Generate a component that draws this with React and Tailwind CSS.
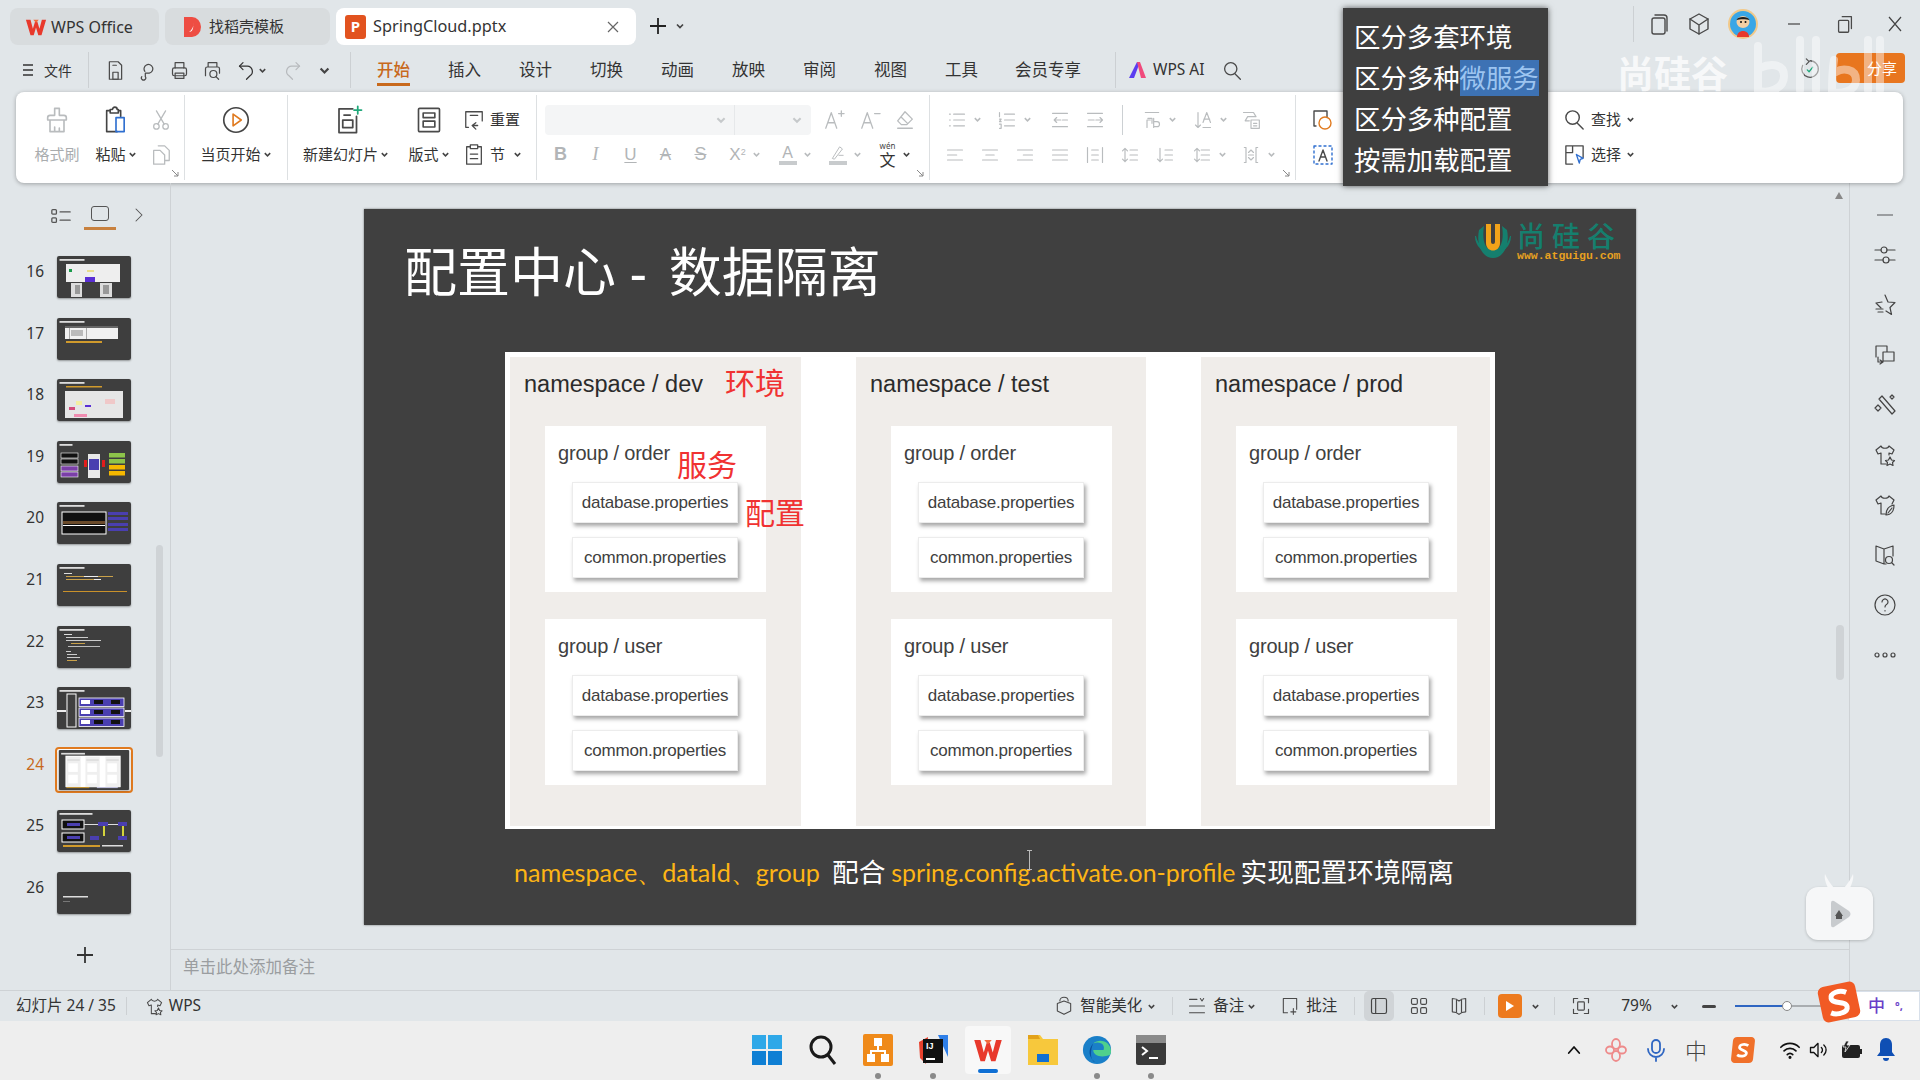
import React from "react";

const Ic = ({ s = 20, c = "#4a4a4a", w = 1.4, className = "", children }) => (
  <svg width={s} height={s} viewBox="0 0 24 24" fill="none" stroke={c} strokeWidth={w} strokeLinecap="round" strokeLinejoin="round" className={"shrink-0 " + className}>
    {children}
  </svg>
);
const Chev = ({ c = "#444", s = 10, className = "" }) => (
  <svg width={s} height={s} viewBox="0 0 10 10" fill="none" stroke={c} strokeWidth="1.7" className={"shrink-0 " + className}>
    <path d="M2 3.5 5 6.5 8 3.5" />
  </svg>
);
const Sep = ({ className = "" }) => <div className={"w-px bg-[#ccd0d3] shrink-0 " + className} />;
const G = "#b9bcbe";

const WpsLogo = ({ s = 22 }) => (
  <svg width={s} height={s} viewBox="0 0 24 24" className="shrink-0">
    <path d="M1 4h5l2.6 10L11 6h2.4l2.4 8L18.4 4H23l-5 17h-3.5L12 12.5 9.5 21H6z" fill="#e8392c" />
    <path d="M9 4h6l-3 3.4z" fill="#f26a3d" />
  </svg>
);

const Tab = ({ className, children }) => (
  <div className={"h-[37px] rounded-lg flex items-center shrink-0 " + className}>{children}</div>
);

function TitleBar() {
  return (
    <div className="h-[48px] flex pl-[10px] shrink-0">
      <div className="flex gap-[6px] pt-[8px]">
        <Tab className="w-[149px] bg-[#d8dcde] pl-[15px] gap-[4px]">
          <WpsLogo s={22} />
          <span className="text-[16px] text-[#333]">WPS Office</span>
        </Tab>
        <Tab className="w-[165px] bg-[#d8dcde] pl-[16px] gap-[6px]">
          <svg width="22" height="24" viewBox="0 0 22 24" className="shrink-0">
            <path d="M3 2h8a9 10 0 0 1 0 20H3z" fill="#ee4d43" />
            <path d="M12 8c1 3-1 7-4 9 3 0 5-3 4-9z" fill="#fff" />
          </svg>
          <span className="text-[15px] text-[#333]">找稻壳模板</span>
        </Tab>
        <Tab className="w-[300px] bg-white pl-[9px]">
          <div className="w-[21px] h-[24px] rounded-[3px] bg-[#e2531f] text-white text-[15px] font-bold flex items-center justify-center">P</div>
          <span className="text-[16.300px] text-[#333] ml-[7px]">SpringCloud.pptx</span>
          <svg width="14" height="14" viewBox="0 0 14 14" stroke="#666" strokeWidth="1.2" className="ml-[100px]"><path d="M2 2l10 10M12 2 2 12" /></svg>
        </Tab>
      </div>
      <div className="flex items-center pt-[4px] ml-[13px]">
        <svg width="18" height="18" viewBox="0 0 18 18" stroke="#222" strokeWidth="1.8"><path d="M9 1v16M1 9h16" /></svg>
        <Chev className="ml-[8px]" />
      </div>
      <div className="ml-auto flex items-center pb-[1px]">
        <Sep className="h-[36px]" />
        <Ic s={24} className="ml-[13px]"><rect x="5" y="6" width="13" height="16" rx="2" /><path d="M8 3h9a3 3 0 0 1 3 3v13" /></Ic>
        <Ic s={24} className="ml-[16px]"><path d="M12 2 21 7v10l-9 5-9-5V7z" /><path d="M3 7l9 6 9-6M12 13v9" /></Ic>
        <div className="ml-[17px] w-[30px] h-[30px] rounded-full bg-[#f1c98a] flex items-center justify-center">
          <svg width="26" height="26" viewBox="0 0 26 26">
            <circle cx="13" cy="13" r="13" fill="#39a6e6" />
            <ellipse cx="13" cy="11" rx="6.5" ry="6" fill="#f4cfa4" />
            <path d="M6.5 9c1-4 12-4 13 0-3-1-10-1-13 0z" fill="#1c1c1c" />
            <circle cx="11" cy="11" r="1" fill="#111" /><circle cx="15.5" cy="11" r="1" fill="#111" />
            <path d="M7 26c0-8 12-8 12 0z" fill="#e8392c" />
          </svg>
        </div>
        <svg width="14" height="14" viewBox="0 0 14 14" stroke="#444" strokeWidth="1.2" className="ml-[29px]"><path d="M1 7h12" /></svg>
        <Ic s={22} className="ml-[33px]"><rect x="5" y="8" width="11" height="13" rx="1" /><path d="M9 4h10v13" /></Ic>
        <svg width="16" height="16" viewBox="0 0 16 16" stroke="#444" strokeWidth="1.2" className="ml-[31px] mr-[17px]"><path d="M2 1l12 14M14 1 2 15" /></svg>
      </div>
    </div>
  );
}

const MENU = ["插入", "设计", "切换", "动画", "放映", "审阅", "视图", "工具"];
function MenuBar() {
  return (
    <div className="h-[44px] flex items-center shrink-0 text-[#333]">
      <svg width="14" height="14" viewBox="0 0 14 14" stroke="#333" strokeWidth="1.3" className="ml-[21px]"><path d="M2 2h10M2 7h10M2 12h10" /></svg>
      <span className="ml-[9px] text-[14px]">文件</span>
      <Sep className="h-[36px] ml-[16px]" />
      <Ic s={21} className="ml-[16px]"><path d="M5 2h10l4 4v16H5z" /><path d="M9 14h6v8H9zM9 6h4" /></Ic>
      <Ic s={21} className="ml-[11px]"><path d="M9 13a5 5 0 1 1 5 2H9.500v4a2.500 2.500 0 1 1-4 0" /></Ic>
      <Ic s={21} className="ml-[11px]"><rect x="4" y="9" width="16" height="9" rx="2" /><path d="M7 9V3h10v6M7 15h10v6H7z" /></Ic>
      <Ic s={21} className="ml-[12px]"><path d="M7 8V3h10v5M4 18V10a2 2 0 0 1 2-2h12a2 2 0 0 1 2 2v5" /><circle cx="13" cy="16" r="4" /><path d="M16 19l3 3" /></Ic>
      <Ic s={21} className="ml-[13px]" c="#333"><path d="M8 3 4 7l4 4" /><path d="M4 7h9a6 6 0 0 1 3 11l-4 4" /></Ic>
      <Chev className="ml-[1px]" s={9} />
      <Ic s={21} className="ml-[15px]" c="#b7babd"><path d="M16 3l4 4-4 4" /><path d="M20 7h-9a6 6 0 0 0-3 11l4 4" /></Ic>
      <Chev className="ml-[15px]" s={13} />
      <Sep className="h-[36px] ml-[19px]" />
      <div className="relative ml-[26px] w-[33px] h-[44px] flex items-center justify-center text-[16.5px] font-medium text-[#c8691c]">
        开始
        <div className="absolute left-0 right-0 bottom-[6px] h-[3px] bg-[#c8691c]" />
      </div>
      <div className="flex ml-[38px] gap-[38px]">
        {MENU.map((m) => (<span key={m} className="w-[33px] text-[16.5px] whitespace-nowrap">{m}</span>))}
      </div>
      <span className="ml-[37px] text-[16.5px]">会员专享</span>
      <Sep className="h-[36px] ml-[34px]" />
      <svg width="19" height="20" viewBox="0 0 19 20" className="ml-[12px]">
        <path d="M9 2h3L6 18H1z" fill="#5b3df0" /><path d="M9 2h3l6 16h-5z" fill="#f04a7c" />
      </svg>
      <span className="ml-[6px] text-[15.500px]">WPS AI</span>
      <Ic s={21} className="ml-[17px]" w={1.5}><circle cx="10" cy="10" r="7" /><path d="M15 16l6 6" /></Ic>
    </div>
  );
}

const Row = ({ className = "", children }) => (
  <div className={"h-[35px] flex items-center shrink-0 " + className}>{children}</div>
);
const Launcher = ({ className }) => (
  <svg width="9" height="9" viewBox="0 0 9 9" stroke="#888" strokeWidth="1" fill="none" className={"absolute " + className}><path d="M1 1l6 6M7 3v4H3" /></svg>
);
const Cell = ({ className = "w-[35px]", children }) => (
  <div className={"flex items-center justify-center gap-[6px] shrink-0 " + className}>{children}</div>
);
const Lines = ({ rows, c = G }) => (
  <Ic s={20} c={c}>{rows.map((d, i) => <path key={i} d={d} />)}</Ic>
);

function Ribbon() {
  return (
    <div className="relative ml-[16px] mr-[17px] h-[91px] bg-white rounded-lg shadow-[0_1px_4px_rgba(0,0,0,0.3)] flex shrink-0 text-[15px] text-[#333]">
      {/* clipboard */}
      <div className="relative w-[169px] h-[85px] mt-[3px] pt-[7px] pl-[18px] flex border-r border-[#dde0e2]">
        <div className="w-[46px] flex flex-col items-center">
          <Row><Ic s={28} c={G}><path d="M10 2h4v6h4a2 2 0 0 1 2 2v2H4v-2a2 2 0 0 1 2-2h4zM6 12v10h12V12M10 22v-4M14 22v-3" /></Ic></Row>
          <Row className="text-[#a9acae] whitespace-nowrap">格式刷</Row>
        </div>
        <div className="w-[46px] ml-[13px] flex flex-col items-center">
          <Row><Ic s={28} c="#444"><path d="M6 4H4v18h9M14 4h2v5M7 6V3h2a2 2 0 0 1 4 0h1v3z" /><rect x="12" y="10" width="7" height="12" stroke="#2f6fd0" /></Ic></Row>
          <Row className="gap-[2px] whitespace-nowrap">粘贴<Chev s={9} /></Row>
        </div>
        <div className="w-[30px] ml-[7px] flex flex-col items-center">
          <Row><Ic s={22} c={G}><circle cx="7" cy="19" r="3" /><circle cx="17" cy="19" r="3" /><path d="M8.500 16.500 17 2M15.500 16.500 7 2" /></Ic></Row>
          <Row><Ic s={22} c={G}><path d="M9 2h7l5 5v11h-5M4 7h7l5 5v10H4z" /></Ic></Row>
        </div>
        <Launcher className="right-[4px] bottom-[2px]" />
      </div>
      {/* play */}
      <div className="w-[103px] h-[85px] mt-[3px] pt-[7px] flex flex-col items-center border-r border-[#dde0e2]">
        <Row><Ic s={28} c="#444"><circle cx="12" cy="12" r="10.500" /><path d="M9.500 7l7 5-7 5z" stroke="#e07a1f" /></Ic></Row>
        <Row className="gap-[2px] whitespace-nowrap">当页开始<Chev s={9} /></Row>
      </div>
      {/* slides */}
      <div className="w-[249px] h-[85px] mt-[3px] pt-[7px] pl-[12px] flex border-r border-[#dde0e2]">
        <div className="w-[92px] flex flex-col items-center">
          <Row className="pl-[6px]"><Ic s={30}><path d="M15 3H4v19h14V9" /><path d="M8 8h5M7 12h8v6H7z" /><path d="M19 1v6M16 4h6" stroke="#1fa87a" /></Ic></Row>
          <Row className="gap-[2px] whitespace-nowrap">新建幻灯片<Chev s={9} /></Row>
        </div>
        <div className="w-[50px] ml-[12px] flex flex-col items-center">
          <Row><Ic s={28}><rect x="3" y="2" width="18" height="20" rx="1" /><rect x="7" y="6" width="10" height="4" /><rect x="7" y="13" width="10" height="5" /></Ic></Row>
          <Row className="gap-[2px] whitespace-nowrap">版式<Chev s={9} /></Row>
        </div>
        <div className="ml-[9px] flex flex-col">
          <Row className="gap-[5px] whitespace-nowrap"><Ic s={22}><path d="M6 20H3V3h18v10M8 7h8" /><path d="M14 22l-4-4 4-3M10 18h6" /></Ic>重置</Row>
          <Row className="gap-[5px] whitespace-nowrap"><Ic s={22}><path d="M8 3H4v19h16V3h-4M8 1v4h8V1zM8 11h8M8 16h8" /></Ic>节<Chev s={9} className="ml-[3px]" /></Row>
        </div>
      </div>
      {/* font */}
      <div className="relative w-[393px] h-[85px] mt-[3px] pt-[7px] flex flex-col border-r border-[#dde0e2]">
        <Row className="pl-[8px]">
          <div className="w-[266px] h-[30px] rounded bg-[#f4f5f6] flex items-center">
            <div className="w-[190px] h-full flex items-center justify-end pr-[7px] border-r border-[#e6e8ea]"><Chev c="#c6c9cb" s={12} /></div>
            <div className="flex-1 flex justify-end pr-[8px]"><Chev c="#c6c9cb" s={12} /></div>
          </div>
          <Cell className="w-[38px] ml-[4px]"><Ic s={22} c={G}><path d="M3 21 9 4l6 17M5.500 15h7M17 5h6M20 2v6" /></Ic></Cell>
          <Cell className="w-[34px]"><Ic s={22} c={G}><path d="M3 21 9 4l6 17M5.500 15h7M17 5h6" /></Ic></Cell>
          <Cell className="w-[36px]"><Ic s={22} c={G}><path d="M12 3l8 8-6 6H8l-4-4zM8 9l7 7M4 21h16" /></Ic></Cell>
        </Row>
        <Row className="pl-[6px]">
          <Cell><span className="font-['Liberation_Sans'] text-[18px] font-bold text-[#b2b5b7]">B</span></Cell>
          <Cell><span className="font-['Liberation_Serif'] text-[19px] italic text-[#b2b5b7]">I</span></Cell>
          <Cell><span className="font-['Liberation_Sans'] text-[17px] underline underline-offset-2 text-[#b2b5b7]">U</span></Cell>
          <Cell><span className="font-['Liberation_Sans'] text-[17px] line-through text-[#b2b5b7]">A</span></Cell>
          <Cell><span className="font-['Liberation_Sans'] text-[18px] line-through text-[#b2b5b7]">S</span></Cell>
          <Cell className="w-[44px] ml-[5px]"><span className="font-['Liberation_Sans'] text-[17px] text-[#b2b5b7]">X<sup className="text-[9px]">2</sup></span><Chev c={G} s={9} /></Cell>
          <Cell className="w-[44px] ml-[6px]"><div className="flex flex-col items-center"><span className="font-['Liberation_Sans'] text-[16px] leading-[17px] text-[#b2b5b7]">A</span><div className="w-[18px] h-[4px] bg-[#c8cbcd]" /></div><Chev c={G} s={9} /></Cell>
          <Cell className="w-[44px] ml-[6px]"><div className="flex flex-col items-center"><Ic s={17} c={G}><path d="M5 20 15 4l4 3L8 21zM14 16h6" /></Ic><div className="w-[18px] h-[4px] bg-[#c8cbcd]" /></div><Chev c={G} s={9} /></Cell>
          <Cell className="w-[44px] ml-[6px]"><div className="flex flex-col items-center gap-[2px]"><span className="text-[8px] leading-[8px] text-[#444]">wén</span><span className="text-[16px] leading-[16px] text-[#333]">文</span></div><Chev s={9} /></Cell>
        </Row>
        <Launcher className="right-[4px] bottom-[2px]" />
      </div>
      {/* paragraph */}
      <div className="relative w-[366px] h-[85px] mt-[3px] pt-[7px] flex flex-col border-r border-[#dde0e2]">
        <Row className="pl-[9px]">
          <Cell className="w-[50px]"><Lines rows={["M3 5h1M8 5h13M3 12h1M8 12h13M3 19h1M8 19h13"]} /><Chev c={G} s={9} /></Cell>
          <Cell className="w-[50px]"><Lines rows={["M3 3v5M3 11h2l-2 3h2M3 17h2v5H3M9 5h12M9 12h12M9 19h12"]} /><Chev c={G} s={9} /></Cell>
          <Cell className="ml-[11px]"><Lines rows={["M3 4h18M3 20h18M13 12H5M8 9l-3 3 3 3M15 12h6"]} /></Cell>
          <Cell className="w-[35px] ml-[7px]"><Lines rows={["M3 4h18M3 20h18M4 12h7M13 12h8M18 9l3 3-3 3"]} /></Cell>
          <Sep className="h-[30px] ml-[10px]" />
          <Cell className="w-[50px] ml-[11px]"><Lines rows={["M4 3h16M6 21V12h4M7 10h5v6M14 10v11M14 14h4a2 2 0 0 1 0 6h-4"]} /><Chev c={G} s={9} /></Cell>
          <Cell className="w-[45px] ml-[4px]"><Lines rows={["M6 3v18M3 18l3 3 3-3M12 15 16.500 3 21 15M13 11h7M12 21h9"]} /><Chev c={G} s={9} /></Cell>
          <Cell className="ml-[8px]"><Lines rows={["M3 3h12l3 5H8l-3 5h5M12 12h10v10H12zM15 16h4M15 19h4"]} /></Cell>
        </Row>
        <Row className="pl-[7px]">
          <Cell><Lines rows={["M3 6h18M3 12h11M3 18h18"]} /></Cell>
          <Cell><Lines rows={["M3 6h18M7 12h10M3 18h18"]} /></Cell>
          <Cell><Lines rows={["M3 6h18M10 12h11M3 18h18"]} /></Cell>
          <Cell><Lines rows={["M3 6h18M3 12h18M3 18h18"]} /></Cell>
          <Cell><Lines rows={["M3 3v18M21 3v18M8 6h8M8 12h8M8 18h8"]} /></Cell>
          <Cell><Lines rows={["M6 4v16M3 7l3-3 3 3M3 17l3 3 3-3M12 6h9M12 12h9M12 18h9"]} /></Cell>
          <Cell><Lines rows={["M6 4v16M3 17l3 3 3-3M12 6h9M12 12h9M12 18h9"]} /></Cell>
          <Cell className="w-[45px] ml-[5px]"><Lines rows={["M6 4v16M3 7l3-3 3 3M3 17l3 3 3-3M11 6h10M11 12h10M11 18h10"]} /><Chev c={G} s={9} /></Cell>
          <Cell className="w-[45px] ml-[4px]"><Lines rows={["M4 3h2v18H4M20 3h-2v18h2M9 9l3-3 3 3M9 12h6M9 15l3 3 3-3"]} /><Chev c={G} s={9} /></Cell>
        </Row>
        <Launcher className="right-[4px] bottom-[2px]" />
      </div>
      {/* replace */}
      <div className="w-[40px] ml-[10px] mt-[10px] flex flex-col">
        <Row className="pl-[5px]"><Ic s={24}><path d="M5 18H3V3h13v6" /><circle cx="14" cy="15" r="6" stroke="#e07a1f" /></Ic></Row>
        <Row className="pl-[5px]"><Ic s={24}><rect x="3" y="3" width="18" height="18" stroke="#2f6fd0" strokeDasharray="2 3" /><path d="M8 18 12 7l4 11M9.500 14h5" /></Ic></Row>
      </div>
      <div className="ml-[217px] mt-[10px] flex flex-col">
        <Row className="gap-[5px] whitespace-nowrap"><Ic s={23} w={1.5}><circle cx="10" cy="10" r="7" /><path d="M15 16l6 6" /></Ic>查找<Chev s={9} /></Row>
        <Row className="gap-[5px] whitespace-nowrap"><Ic s={23}><path d="M3 10V3h18v12M3 10v12h7M10 3v7H3" /><path d="M14 12l7 4-3 1-1 4z" stroke="#2f6fd0" /></Ic>选择<Chev s={9} /></Row>
      </div>
    </div>
  );
}

/* ---------- thumbnails ---------- */
const R = (x, y, w, h, f) => <rect x={x} y={y} width={w} height={h} fill={f} />;
const Head = ({ w = 25, c = "#ddd" }) => <rect x="2.500" y="3" width={w} height="1.800" fill={c} />;
const T = {
  16: <><Head /><rect x="9" y="8" width="54" height="18" fill="#eeeeee" />{R(28, 21, 10, 5, "#5a2fd4")}{R(12, 13, 3, 3, "#1a9b4b")}{R(30, 14, 7, 2, "#e8dd8c")}{R(14, 27, 41, 14, "#dddddd")}{R(25, 27, 18, 14, "#404040")}{R(18, 29, 5, 9, "#999")}{R(46, 29, 6, 9, "#999")}</>,
  17: <><Head /><rect x="8" y="8" width="53" height="13" fill="#f1f1f1" />{R(8, 8, 53, 2, "#666")}{R(12, 10, 1, 11, "#aaa")}{R(29, 10, 1, 11, "#aaa")}{R(14, 12, 12, 6, "#bbb")}{R(9, 23, 36, 2, "#d09a2c")}</>,
  18: <><Head /><rect x="8" y="12" width="58" height="27" fill="#e6e6e6" />{R(9, 7, 36, 1.500, "#d09a2c")}{R(12, 28, 6, 3, "#d44e7e")}{R(19, 22, 6, 4, "#f3efa2")}{R(28, 26, 6, 2, "#5a2fd4")}{R(48, 20, 10, 5, "#f0c8c8")}{R(17, 35, 13, 3, "#f08cb0")}</>,
  19: <><Head w={13} />{[8, 14, 21, 27].map((y, i) => <g key={y}><rect x="4" y={y + 4} width="17" height="5" fill={i < 2 ? "#111" : "#7b3fa8"} stroke="#fff" strokeWidth=".6" /></g>)}<rect x="31" y="13" width="12" height="24" fill="#e8e8e8" />{R(32, 18, 10, 11, "#4a3fb0")}{R(27, 19, 3, 7, "#e21c1c")}{R(45, 19, 3, 7, "#e21c1c")}{R(52, 12, 16, 4.500, "#8dc44a")}{R(52, 18, 16, 4.500, "#8dc44a")}{R(52, 24, 16, 4.500, "#f5b800")}{R(52, 30, 16, 4.500, "#f5b800")}</>,
  20: <><Head /><rect x="5" y="10" width="44" height="22" fill="#111" stroke="#fff" />{R(6, 19, 42, 3, "#6a4a2a")}{R(6, 23, 42, 1, "#fff")}{R(51, 10, 20, 3, "#4a3fb0")}{R(51, 15, 20, 3, "#4a3fb0")}{R(51, 21, 20, 3, "#4a3fb0")}{R(51, 26, 20, 3, "#4a3fb0")}</>,
  21: <><Head />{R(7, 9, 8, 1, "#ddd")}{R(9, 12, 47, 1, "#c9a14a")}{R(9, 15, 35, 1, "#c9a14a")}{R(27, 12, 14, 1, "#eee")}{R(37, 15, 7, 1, "#eee")}{R(6, 27, 64, 1, "#c9912a")}</>,
  22: <><Head />{R(7, 8, 8, 1, "#ddd")}{R(9, 11, 22, 1, "#ccc")}{R(9, 14, 35, 1, "#ccc")}{R(14, 17, 14, 1, "#c9a14a")}{R(11, 20, 32, 1, "#bbb")}{R(9, 25, 5, 1, "#ccc")}{R(10, 28, 10, 1, "#ccc")}{R(10, 31, 13, 1, "#ccc")}{R(10, 34, 10, 1, "#c9a14a")}</>,
  23: <><Head />{R(10, 7, 9, 32, "#404040")}<rect x="10" y="7" width="9" height="33" fill="none" stroke="#fff" />{[11, 21, 31].map((y) => <g key={y}><rect x="22" y={y} width="45" height="8.500" fill="#4a3fb0" stroke="#fff" strokeWidth=".8" />{R(24, y + 2, 9, 4, "#fff")}{R(37, y + 2, 9, 4, "#111")}{R(54, y + 2, 9, 4, "#111")}</g>)}{R(0, 23, 9, 2, "#eee")}{R(68, 23, 6, 2, "#eee")}</>,
  24: <><Head />{R(7, 6, 58, 33, "#fff")}{[8, 28, 49].map((x) => <g key={x}>{R(x, 7, 15, 32, "#efefef")}{R(x + 1, 10, 13, 1, "#ccc")}{R(x + 2, 14, 10, 9, "#fff")}{R(x + 2, 26, 10, 9, "#fff")}</g>)}{R(8, 39, 24, 1, "#d09a2c")}{R(40, 39, 22, 1, "#cce")}</>,
  25: <><Head w={33} /><rect x="5" y="10" width="22" height="9" fill="#111" stroke="#fff" />{R(10, 13, 13, 3, "#4a3fb0")}<rect x="5" y="23" width="22" height="9" fill="#111" stroke="#fff" />{R(10, 26, 13, 3, "#4a3fb0")}{R(41, 12, 10, 4, "#4a3fb0")}{R(61, 12, 9, 4, "#4a3fb0")}{R(33, 26, 9, 4, "#4a3fb0")}{R(61, 26, 9, 4, "#4a3fb0")}{R(27, 14, 14, 1, "#ddd")}{R(51, 14, 10, 1, "#ddd")}{R(46, 16, 2, 10, "#d4d43c")}{R(65, 16, 2, 10, "#d4d43c")}{R(6, 35, 37, 2, "#d09a2c")}{R(45, 35, 21, 1.500, "#ddd")}</>,
  26: <>{R(6, 24, 25, 1.500, "#ddd")}{R(6, 29, 7, 1, "#777")}</>,
};
const Thumb = ({ n }) => {
  const sel = n === 24;
  return (
    <div className="flex h-[42px] shrink-0">
      <div className={"w-[46px] text-right pr-[2px] text-[15.500px] leading-[30px] " + (sel ? "text-[#c8691c]" : "text-[#333]")}>{n}</div>
      <div className={sel ? "ml-[9px] -mt-[2px] w-[78px] h-[46px] rounded-[4px] border-[2px] border-[#e07a1f] bg-white p-[1px]" : "ml-[11px]"}>
        <svg viewBox="0 0 74 42" width={sel ? 72 : 74} height={sel ? 40 : 42} className="rounded-[2px] shadow-[0_1px_2px_rgba(0,0,0,0.35)]">
          <rect width="74" height="42" fill="#3e3e3e" />
          {T[n]}
        </svg>
      </div>
    </div>
  );
};

function Sidebar() {
  return (
    <div className="relative w-[171px] border-r border-[#ced2d5] shrink-0 flex flex-col">
      <div className="h-[73px] flex items-start pt-[22px] shrink-0">
        <Ic s={22} className="ml-[50px]" c="#555"><rect x="2" y="5" width="5" height="5" rx="1" /><rect x="2" y="14" width="5" height="5" rx="1" /><path d="M11 7.500h11M11 16.500h11" /></Ic>
        <div className="ml-[12px] w-[32px] h-[25px] border-b-[3px] border-[#c8813f] flex justify-center">
          <div className="w-[18px] h-[15px] border-[1.500px] border-[#555] rounded-[3px] mt-[1px]" />
        </div>
        <Ic s={18} c="#555" className="ml-[14px] mt-[1px]"><path d="M8 4l8 8-8 8" /></Ic>
      </div>
      <div className="flex flex-col gap-[19.600px]">
        {[16, 17, 18, 19, 20, 21, 22, 23, 24, 25, 26].map((n) => <Thumb key={n} n={n} />)}
      </div>
      <svg width="20" height="20" viewBox="0 0 20 20" stroke="#333" strokeWidth="1.800" className="ml-[75px] mt-[31px]"><path d="M10 2v16M2 10h16" /></svg>
      <div className="absolute left-[156px] top-[362px] w-[7px] h-[212px] rounded-full bg-[#cfd3d6]" />
    </div>
  );
}

const Prop = ({ children }) => (
  <div className="w-[166px] h-[41px] bg-white border border-[#ececec] shadow-[2px_3px_4px_rgba(0,0,0,0.35)] flex items-center justify-center font-['Liberation_Sans'] text-[17px] tracking-[-0.2px] text-[#404040]">{children}</div>
);
const Group = ({ name }) => (
  <div className="ml-[35px] w-[221px] h-[166px] bg-white pt-[14px] pl-[13px]">
    <div className="h-[28px] leading-[26px] font-['Liberation_Sans'] text-[20px] tracking-[-0.2px] text-[#404040]">{name}</div>
    <div className="ml-[14px] mt-[14px] flex flex-col gap-[14px]">
      <Prop>database.properties</Prop>
      <Prop>common.properties</Prop>
    </div>
  </div>
);
const NS = ({ name, className }) => (
  <div className={"h-[469px] bg-[#f0edea] " + className}>
    <div className="h-[55px] flex items-center pl-[14px] font-['Liberation_Sans'] text-[23.500px] text-[#2b2b2b]">{name}</div>
    <div className="mt-[14px] flex flex-col gap-[27px]">
      <Group name="group / order" />
      <Group name="group / user" />
    </div>
  </div>
);

function Slide() {
  const red = "absolute text-[30px] leading-[30px] text-[#f03232]";
  return (
    <div className="relative ml-[193px] mt-[26px] w-[1272px] h-[716px] bg-[#404040] shadow-[0_0_2px_rgba(0,0,0,0.5)] flex flex-col shrink-0">
      <div className="h-[143px] pl-[40px] pb-[17px] flex items-center shrink-0 text-[53px] text-white whitespace-nowrap">
        <span>配置中心 -</span><span className="ml-[22px]">数据隔离</span>
      </div>
      <div className="relative ml-[141px] w-[990px] h-[477px] bg-white flex pl-[5px] pt-[5px] gap-[55px] shrink-0">
        <NS name="namespace / dev" className="w-[291px]" />
        <NS name="namespace / test" className="w-[290px]" />
        <NS name="namespace / prod" className="w-[289px]" />
        <span className={red + " left-[220px] top-[16px]"}>环境</span>
        <span className={red + " left-[172px] top-[98px]"}>服务</span>
        <span className={red + " left-[240px] top-[146px]"}>配置</span>
      </div>
      <div className="h-[87px] pl-[150px] flex items-center whitespace-nowrap text-[26.700px] text-white">
        <span className="font-['Lato'] text-[25.200px] text-[#fdb515]">namespace、dataId、group</span>
        <span className="ml-[12px]">配合</span>
        <span className="ml-[6px] font-['Lato'] text-[24.900px] text-[#fdb515]">spring.config.activate.on-profile</span>
        <span className="ml-[5px]">实现配置环境隔离</span>
      </div>
      {/* logo */}
      <div className="absolute right-[14px] top-[13px] flex items-start">
        <svg width="40" height="40" viewBox="0 0 40 40">
          <path d="M2 14a18 18 0 0 0 36 0l-1 0c-2 10-10 15-17 15S5 24 3 14z" fill="#157f6e" />
          <path d="M6 8c-3 14 3 28 14 28s17-14 14-28l-5-4c2 12 0 24-9 24S9 16 11 4z" fill="#157f6e" />
          <path d="M13 2h5v18a2 2 0 0 0 4 0V2h5v19c0 10-14 10-14 0z" fill="#f2a31a" />
        </svg>
        <div className="ml-[4px] flex flex-col items-start">
          <span className="h-[28px] text-[28px] leading-[28px] tracking-[7px] text-[#157f6e] font-medium">尚硅谷</span>
          <span className="font-['Liberation_Mono'] text-[11.500px] leading-[12px] font-bold text-[#e8a020]">www.atguigu.com</span>
        </div>
      </div>
      {/* I-beam */}
      <svg width="7" height="20" viewBox="0 0 7 20" stroke="#bbb" strokeWidth="1" className="absolute left-[662px] top-[641px]"><path d="M1 .5h5M3.500 .5v19M1 19.500h5" /></svg>
    </div>
  );
}

function Center() {
  return (
    <div className="relative flex-1 flex flex-col min-w-0">
      <div className="h-[766px] shrink-0"><Slide /></div>
      <div className="flex-1 border-t border-[#ced2d5] pl-[12px] pb-[5px] flex items-center text-[16.500px] text-[#9a9da0]">单击此处添加备注</div>
      {/* scrollbar */}
      <svg width="8" height="7" viewBox="0 0 8 7" className="absolute left-[1664px] top-[9px]"><path d="M4 0l4 7H0z" fill="#888" /></svg>
      <div className="absolute left-[1665px] top-[442px] w-[8px] h-[55px] rounded-full bg-[#cfd3d6]" />
      {/* floating widget */}
      <div className="absolute left-[1635px] top-[704px] w-[67px] h-[53px] rounded-[12px] bg-[#f6f7f8] shadow-[0_1px_3px_rgba(0,0,0,0.2)] flex items-center justify-center">
        <svg width="26" height="30" viewBox="0 0 26 30"><path d="M4 4q0-3 3-2l15 10q3 3 0 6L7 28q-3 1-3-2z" fill="#c8cbce" /><path d="M12 11l4 6H8z" fill="#555" /><path d="M9 17h6v3H9z" fill="#555" /></svg>
        <svg width="36" height="14" viewBox="0 0 36 14" className="absolute -top-[13px] left-[15px]"><path d="M4 0c2 5 5 9 9 14H7C5 9 3 5 4 0zM32 0c-2 5-5 9-9 14h6c2-5 4-9 3-14z" fill="#f6f7f8" /></svg>
      </div>
    </div>
  );
}

const RIGHT = [
  <g key="a"><path d="M2 7h6M14 7h8M2 17h8M16 17h6" /><circle cx="11" cy="7" r="3" /><circle cx="13" cy="17" r="3" /></g>,
  <g key="b"><path d="M12 2l3 7 7 .5-5 5 1.500 7L13 18M8 15l-2-2-3-3 6-1" /><path d="M3 16h7M5 19h5" /></g>,
  <g key="c"><path d="M3 14V3h11v6M10 9h11v9H10zM5 14v5h5M7 17l3 2-3 2" /></g>,
  <g key="d"><path d="M9 3 22 18l-3 3L6 6zM5 12l3 3-3 3-3-3zM19 2l2 2-2 2-2-2z" /></g>,
  <g key="e"><path d="M8 3 3 7l2 4 3-1v11h5M16 3l5 4-2 4-3-1v2M8 3c1 3 7 3 8 0M17 14l1.500 3 3 .5-2 2 .5 3-3-1.500-3 1.500.5-3-2-2 3-.5z" /></g>,
  <g key="f"><path d="M8 3 3 7l2 4 3-1v11h4M16 3l5 4-2 4M8 3c1 3 7 3 8 0M21 12c-5 1-8 4-8 10 5 0 8-4 8-10zM15 20l4-5" /></g>,
  <g key="g"><path d="M3 3l8 3 9-3v10M3 3v15l8 3v-15M11 21h2" /><circle cx="16" cy="17" r="3.500" /><path d="M19 20l2 2" /></g>,
  <g key="h"><circle cx="12" cy="12" r="10" /><path d="M9 9a3 3 0 1 1 4.500 2.600c-1 .6-1.500 1.400-1.500 2.400M12 17.500v.5" /></g>,
  <g key="i"><circle cx="4" cy="12" r="2" /><circle cx="12" cy="12" r="2" /><circle cx="20" cy="12" r="2" /></g>,
];
function RightBar() {
  return (
    <div className="w-[71px] shrink-0 border-l border-[#ced2d5] flex flex-col items-center">
      <div className="mt-[22px] h-[20px] flex items-center"><div className="w-[16px] h-[2px] bg-[#9a9da0]" /></div>
      <div className="mt-[5px] flex flex-col">
        {RIGHT.map((p, i) => (
          <div key={i} className="h-[50px] flex items-center justify-center"><Ic s={24} c="#444" w={1.200}>{p}</Ic></div>
        ))}
      </div>
    </div>
  );
}

function StatusBar() {
  return (
    <div className="relative h-[31px] border-t border-[#ced2d5] shrink-0 flex items-center text-[15.500px] text-[#333]">
      <span className="ml-[16px] whitespace-nowrap">幻灯片 24 / 35</span>
      <Sep className="h-[18px] ml-[10px]" />
      <Ic s={19} className="ml-[18px]" w={1.300}><path d="M8 3 3 7l2 4 3-1v11h5M16 3l5 4-2 4-3-1v2M8 3c1 3 7 3 8 0M17 14l1.500 3 3 .5-2 2 .5 3-3-1.500-3 1.500.5-3-2-2 3-.5z" /></Ic>
      <span className="ml-[5px]">WPS</span>
      <Ic s={20} className="ml-[853px]" w={1.300}><path d="M7 6c0-6 10-6 10 0M4 9v9l8 4 8-4V9l-8-3z" /></Ic>
      <span className="ml-[6px] whitespace-nowrap">智能美化</span>
      <Chev s={9} className="ml-[5px]" />
      <Sep className="h-[18px] ml-[16px]" />
      <Ic s={20} className="ml-[14px]" w={1.300}><path d="M3 4h9M3 12h18M3 20h18M16 3l2 3 2-3" /></Ic>
      <span className="ml-[6px]">备注</span>
      <Chev s={9} className="ml-[3px]" />
      <Ic s={20} className="ml-[24px]" w={1.300}><path d="M9 20H4V3h16v13M16 15v7M13 19h6" /></Ic>
      <span className="ml-[6px]">批注</span>
      <Sep className="h-[18px] ml-[17px]" />
      <div className="ml-[9px] w-[30px] h-[30px] rounded-[5px] bg-[#d0d4d7] flex items-center justify-center"><Ic s={20} c="#444"><rect x="3" y="3" width="18" height="18" rx="2" /><path d="M8 3v18" /></Ic></div>
      <Ic s={20} className="ml-[15px]"><rect x="3" y="3" width="7" height="7" rx="1.500" /><rect x="14" y="3" width="7" height="7" rx="1.500" /><rect x="3" y="14" width="7" height="7" rx="1.500" /><rect x="14" y="14" width="7" height="7" rx="1.500" /></Ic>
      <Ic s={20} className="ml-[20px]"><path d="M4 3c3 0 6 1 8 3 2-2 5-3 8-3v16c-3 0-6 1-8 3-2-2-5-3-8-3zM9 4v15M15 4v15" /></Ic>
      <Sep className="h-[18px] ml-[15px]" />
      <div className="ml-[13px] w-[24px] h-[24px] rounded-[4px] bg-[#ed7a1e] flex items-center justify-center"><svg width="10" height="12" viewBox="0 0 10 12"><path d="M1 1l8 5-8 5z" fill="#fff" /></svg></div>
      <Chev s={9} className="ml-[9px]" />
      <Sep className="h-[18px] ml-[14px]" />
      <Ic s={20} className="ml-[16px]"><path d="M3 8V3h5M21 8V3h-5M3 16v5h5M21 16v5h-5" /><rect x="8" y="7" width="8" height="10" rx="1" /></Ic>
      <span className="ml-[30px]">79%</span>
      <Chev s={9} className="ml-[18px]" />
      <div className="ml-[23px] w-[14px] h-[3px] rounded bg-[#444]" />
      <div className="ml-[19px] w-[50px] h-[2px] bg-[#2f66c2]" />
      <div className="w-[10px] h-[10px] rounded-full bg-white border border-[#888] -ml-[3px] shrink-0" />
      <div className="w-[36px] h-[2px] bg-[#a9adb0]" />
      {/* IME overlay */}
      <div className="absolute right-0 top-0 w-[72px] h-[30px] bg-white border border-[#d8e0ea] flex items-center pl-[19px] text-[#6a3fc8] text-[17px] font-medium">
        中<span className="ml-[10px] text-[11px] leading-[14px] font-bold">°,</span>
      </div>
      <div className="absolute left-[1820px] -top-[7px] w-[38px] h-[36px] rounded-[6px] bg-[#f15a24] -rotate-12 flex items-center justify-center">
        <svg width="26" height="28" viewBox="0 0 26 28" fill="none" stroke="#fff" strokeWidth="5"><path d="M22 6C16 2 6 3 6 9s14 5 14 11-11 7-17 3" /></svg>
      </div>
    </div>
  );
}

function Taskbar() {
  const dot = <div className="w-[6px] h-[6px] rounded-full bg-[#8a8a8a]" />;
  const App = ({ ml, w = "w-[30px]", d, children }) => (
    <div className={"relative flex items-center justify-center h-[32px] " + w + " " + ml}>
      {children}
      {d && <div className="absolute -bottom-[13px]">{dot}</div>}
    </div>
  );
  return (
    <div className="h-[59px] bg-[#eeeeee] shrink-0 flex items-center pb-[2px]">
      <App ml="ml-[752px]">
        <svg width="30" height="30" viewBox="0 0 30 30">
          <rect width="14" height="14" fill="#2fa8e8" /><rect x="16" width="14" height="14" fill="#2fa8e8" /><rect y="16" width="14" height="14" fill="#0f7fd4" /><rect x="16" y="16" width="14" height="14" fill="#0f7fd4" />
        </svg>
      </App>
      <App ml="ml-[26px]">
        <svg width="30" height="32" viewBox="0 0 30 32" fill="none" stroke="#1a1a1a" strokeWidth="3"><circle cx="13" cy="13" r="10" /><path d="M20 21l7 9" /></svg>
      </App>
      <App ml="ml-[25px]" d>
        <svg width="30" height="32" viewBox="0 0 30 32">
          <rect width="30" height="32" rx="2" fill="#ef8a1a" />
          <path d="M11 4h8v8h-8zM4 20h8v8H4zM18 20h8v8h-8z" fill="#fff" /><path d="M15 12v5M8 20v-3h14v3" stroke="#fff" strokeWidth="2" fill="none" />
        </svg>
      </App>
      <App ml="ml-[25px]" d>
        <svg width="30" height="32" viewBox="0 0 30 32">
          <path d="M1 8 10 3 8 30 2 24z" fill="#e8402c" /><path d="M20 1h10v22z" fill="#2f7fe8" /><rect x="5" y="5" width="20" height="24" fill="#111" />
          <rect x="8" y="24" width="9" height="2" fill="#fff" />
          <text x="8" y="15" fontSize="9" fontWeight="700" fill="#fff" fontFamily="Liberation Sans">IJ</text>
        </svg>
      </App>
      <div className="relative ml-[17px] w-[46px] h-[48px] rounded-[4px] bg-[#f8f8f8] flex items-center justify-center shrink-0">
        <WpsLogo s={30} />
        <div className="absolute bottom-[1px] left-[13px] w-[20px] h-[4px] rounded-full bg-[#0f6fd4]" />
      </div>
      <App ml="ml-[17px]">
        <svg width="30" height="32" viewBox="0 0 30 32"><path d="M0 1h12l3 4h15v26H0z" fill="#f7c83c" /><path d="M0 1h10l2 4H0z" fill="#e3a21a" /><path d="M9 20h12v8H9z" fill="#0f6fd4" /></svg>
      </App>
      <App ml="ml-[24px]" d>
        <svg width="32" height="32" viewBox="0 0 32 32">
          <circle cx="16" cy="16" r="15" fill="#1a7fc8" /><path d="M31 18C31 6 18 3 12 9c8-3 13 2 11 7H12c0 6 9 9 18 5z" fill="#4fd08c" />
          <path d="M12 9c-6 6-5 15 2 20-6-2-5-14-2-20z" fill="#0b4f9c" />
        </svg>
      </App>
      <App ml="ml-[24px]" d>
        <svg width="30" height="32" viewBox="0 0 30 32"><rect y="1" width="30" height="30" rx="2" fill="#3a3a3a" /><rect y="1" width="30" height="8" fill="#8a8a8a" /><path d="M6 13l5 4-5 4" stroke="#fff" strokeWidth="2" fill="none" /><path d="M13 24h9" stroke="#fff" strokeWidth="2" /></svg>
      </App>
      <Ic s={18} c="#111" w={2.400} className="ml-[399px]"><path d="M5 16l7-8 7 8" /></Ic>
      <svg width="22" height="24" viewBox="0 0 22 24" className="ml-[22px]" fill="none" stroke="#ee8a8a" strokeWidth="1.800"><ellipse cx="11" cy="6" rx="4" ry="5" /><ellipse cx="11" cy="18" rx="4" ry="5" /><ellipse cx="5" cy="12" rx="4" ry="3.500" /><ellipse cx="17" cy="12" rx="4" ry="3.500" /></svg>
      <Ic s={24} c="#2f66c2" w={1.800} className="ml-[17px]"><rect x="8" y="2" width="8" height="13" rx="4" /><path d="M4 11a8 8 0 0 0 16 0M12 19v4" /></Ic>
      <span className="ml-[17px] text-[22px] leading-[24px] text-[#444] font-light">中</span>
      <div className="ml-[25px] w-[22px] h-[26px] rounded-[4px] bg-[#f0702a] -skew-x-6 flex items-center justify-center">
        <svg width="14" height="18" viewBox="0 0 26 28" fill="none" stroke="#fff" strokeWidth="5"><path d="M22 6C16 2 6 3 6 9s14 5 14 11-11 7-17 3" /></svg>
      </div>
      <Ic s={22} c="#111" w={1.800} className="ml-[25px]"><path d="M2 9a14 14 0 0 1 20 0M5.500 13a9 9 0 0 1 13 0M9 17a4 4 0 0 1 6 0" /><circle cx="12" cy="20" r=".8" /></Ic>
      <Ic s={20} c="#111" w={1.600} className="ml-[7px]"><path d="M3 9v6h4l5 5V4L7 9zM16 9a4 4 0 0 1 0 6M19 6a8 8 0 0 1 0 12" /></Ic>
      <svg width="24" height="20" viewBox="0 0 24 20" className="ml-[11px]"><rect x="3" y="5" width="18" height="13" rx="2" fill="#222" /><rect x="21" y="9" width="2" height="5" fill="#222" /><path d="M7 1l-3 6h3l-1 5 5-7H8l2-4z" fill="#222" stroke="#eee" strokeWidth=".8" /></svg>
      <svg width="22" height="26" viewBox="0 0 22 26" className="ml-[12px]"><path d="M11 1c4 0 6 3 6 7v7l3 4H2l3-4V8c0-4 2-7 6-7z" fill="#0f4fb4" /><path d="M8 21a3 3 0 0 0 6 0z" fill="#0f4fb4" /></svg>
    </div>
  );
}

export default function App() {
  return (
    <div className="relative w-[1920px] h-[1080px] overflow-hidden flex flex-col bg-[#e1e6e9] font-['Noto_Sans','Noto_Sans_CJK_SC',sans-serif]">
      <TitleBar />
      <MenuBar />
      <Ribbon />
      <div className="flex-1 flex min-h-0">
        <Sidebar />
        <Center />
        <RightBar />
      </div>
      <StatusBar />
      <Taskbar />

      {/* overlay note from the video */}
      <div className="absolute left-[1343px] top-[8px] w-[205px] h-[178px] bg-[#3f3f3f] shadow-[0_0_6px_rgba(0,0,0,0.6)] pl-[11px] pt-[9px] text-[26.400px] leading-[41px] text-white whitespace-nowrap">
        <div>区分多套环境</div>
        <div>区分多种<span className="bg-[#3d72b4] text-[#9cc4f0]">微服务</span></div>
        <div>区分多种配置</div>
        <div>按需加载配置</div>
      </div>

      {/* watermarks */}
      <div className="absolute left-[1617px] top-[50px] text-[37px] leading-[48px] font-bold text-white/75 whitespace-nowrap">尚硅谷</div>
      <div className="absolute left-[1836px] top-[53px] w-[69px] h-[30px] rounded-[4px] bg-[#e8761f] flex items-center justify-end pr-[8px] text-[15px] text-white">分享</div>
      <Ic s={22} c="#555" className="absolute left-[1799px] top-[58px]"><path d="M12 3a9 9 0 1 1-8 5M8 7l3-3-3-3" /><path d="M9 13l2 2 4-5" stroke="#1fa87a" /></Ic>
      <svg width="140" height="70" viewBox="0 0 140 70" className="absolute left-[1750px] top-[32px]" fill="none" stroke="#ffffff" strokeOpacity=".45" strokeWidth="8" strokeLinecap="round">
        <path d="M8 14v44c8 4 26 0 26-14s-16-12-24-8M50 8v50M66 8v50M84 28c-2 12-2 22-2 32 8 2 24 0 24-12s-14-12-20-8M118 8v50M130 8v50" />
      </svg>
    </div>
  );
}
